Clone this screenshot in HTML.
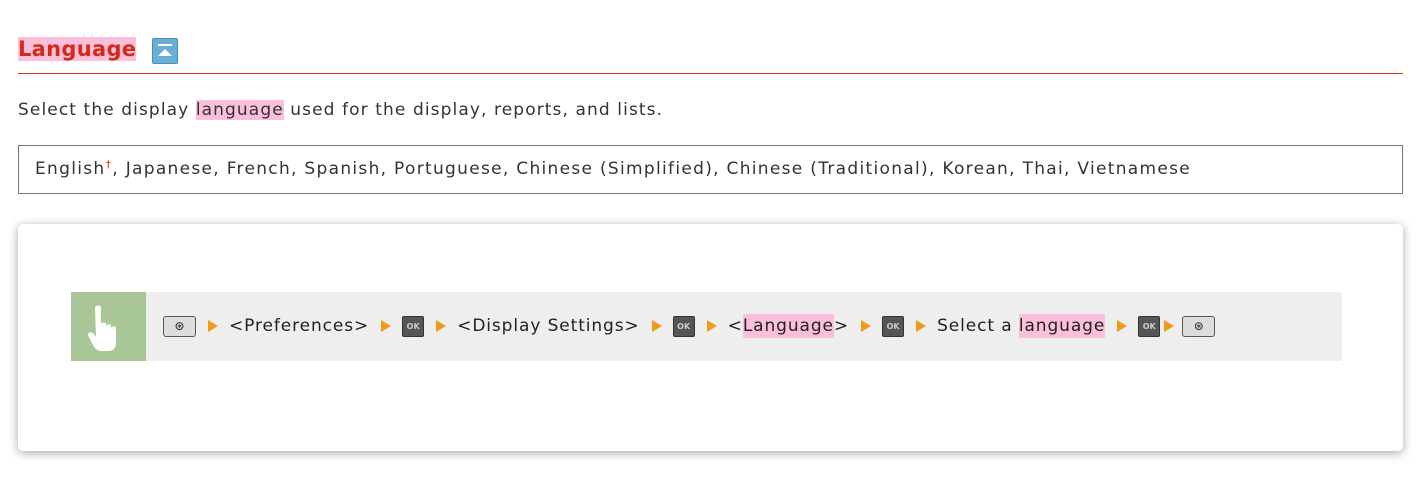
<!DOCTYPE html>
<html><head><meta charset="utf-8"><style>
body{margin:0;width:1420px;height:479px;background:#fff;font-family:"DejaVu Sans","Liberation Sans",sans-serif;color:#333;position:relative;overflow:hidden}
.hl{background:#fbbfdc}
h2{position:absolute;left:18px;top:36px;margin:0;font-size:21px;font-weight:bold;color:#d22b1a;line-height:27px;letter-spacing:0.3px}
.top{position:absolute;left:152px;top:38px;width:26px;height:26px;background:#6aaed6;border:1px solid #4a8db8;box-sizing:border-box;border-radius:2px}
.rule{position:absolute;left:18px;top:73px;width:1385px;height:1px;background:#e0321c}
.p{position:absolute;left:18px;top:98px;font-size:17px;line-height:24px;letter-spacing:1.1px}
.box{position:absolute;left:18px;top:145px;width:1385px;height:49px;border:1px solid #777;box-sizing:border-box;font-size:17px;line-height:47px;padding-left:16px;letter-spacing:1.3px;white-space:nowrap}
.card{position:absolute;left:18px;top:224px;width:1385px;height:227px;border-radius:5px;background:#fff;box-shadow:0 2px 10px rgba(0,0,0,.35)}
.bar{position:absolute;left:71px;top:292px;width:1271px;height:69px;background:#eee}
.g{position:absolute;left:71px;top:292px;width:75px;height:69px;background:#a9c796}
.steps{position:absolute;left:163px;top:314px;font-size:17px;line-height:24px;white-space:nowrap;display:flex;align-items:center;color:#222;letter-spacing:0.9px}
.ar{display:inline-block;width:0;height:0;border-left:10px solid #f39a1e;border-top:6px solid transparent;border-bottom:6px solid transparent;margin:0 11px 0 12px}
.ok{display:inline-block;width:22px;height:21px;background:#555;border:1px solid #333;border-radius:2px;color:#ccc;font-size:8px;font-weight:bold;text-align:center;line-height:19px;box-sizing:border-box;letter-spacing:0}
.hm{display:inline-block;width:33px;height:21px;border:1px solid #555;border-radius:3px;background:#ddd;box-sizing:border-box;text-align:center;font-size:12px;line-height:19px;letter-spacing:0}
</style></head><body>
<h2><span class="hl">Language</span></h2>
<div class="top"><svg width="24" height="24"><rect x="5" y="5" width="14" height="2" fill="#fff"/><path d="M5 17 L12 10 L19 17Z" fill="#fff"/></svg></div>
<div class="rule"></div>
<div class="p">Select the display <span class="hl">language</span> used for the display, reports, and lists.</div>
<div class="box">English<sup style="color:#d22b1a;font-size:11px;vertical-align:6px;line-height:0">†</sup>, Japanese, French, Spanish, Portuguese, Chinese (Simplified), Chinese (Traditional), Korean, Thai, Vietnamese</div>
<div class="card"></div>
<div class="bar"></div>
<div class="g"><svg width="75" height="69"><path d="M24 15 q3-3 6 0 v17 q2-3 5-1 v3 q2-3 5-1 v3 q2-3 5-1 v16 q0 7-6 8 h-10 q-5-1-7-6 l-5-10 q0-4 5-2 l3 4 Z" fill="#fff"/></svg></div>
<div class="steps"><span class="hm">⊛</span><span class="ar"></span>&lt;Preferences&gt;<span class="ar"></span><span class="ok">OK</span><span class="ar"></span>&lt;Display Settings&gt;<span class="ar"></span><span class="ok">OK</span><span class="ar"></span>&lt;<span class="hl">Language</span>&gt;<span class="ar"></span><span class="ok">OK</span><span class="ar"></span>Select a&nbsp;<span class="hl">language</span><span class="ar"></span><span class="ok">OK</span><span class="ar" style="margin:0 8px 0 4px"></span><span class="hm">⊛</span></div>
</body></html>
